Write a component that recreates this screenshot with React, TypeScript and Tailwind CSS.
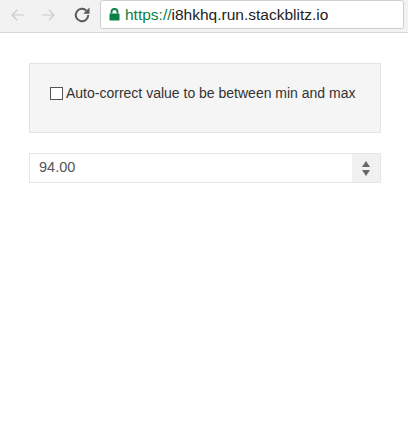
import { useState } from 'react'

export default function App() {
  const [checked, setChecked] = useState(false)
  const [value, setValue] = useState('94.00')

  return (
    <div className="w-[408px] h-[425px] bg-white overflow-hidden" style={{ fontFamily: '"Liberation Sans", Arial, sans-serif' }}>
      {/* browser chrome */}
      <div className="h-[33px] bg-[#f2f2f2] border-b border-[#d6d6d6] flex items-center">
        <div className="flex items-center w-[100px] shrink-0 pl-[9px] gap-[12px] pb-[3px]">
          <svg width="18" height="18" viewBox="0 0 24 24" className="text-[#cbcbcb]">
            <path d="M20 12H5M11 5l-7 7 7 7" fill="none" stroke="currentColor" strokeWidth="1.6" />
          </svg>
          <svg width="18" height="18" viewBox="0 0 24 24" className="text-[#cbcbcb]">
            <path d="M4 12h15M13 5l7 7-7 7" fill="none" stroke="currentColor" strokeWidth="1.6" />
          </svg>
          <svg width="20" height="20" viewBox="0 0 24 24" className="ml-[3px] text-[#5a5a5a]">
            <path d="M19.5 12a7.5 7.5 0 1 1-2.2-5.3" fill="none" stroke="currentColor" strokeWidth="2.4" />
            <path d="M21 3v7.5h-7.5z" fill="currentColor" />
          </svg>
        </div>
        <div className="h-[29px] mb-[3px] flex-1 mr-[4px] bg-white border border-[#cfcfcf] rounded-[3px] flex items-center pl-[8px] gap-[5px]">
          <svg width="11" height="13" viewBox="0 0 11 13">
            <path d="M2.5 5.5V4a3 3 0 0 1 6 0v1.5" fill="none" stroke="#0b8043" strokeWidth="1.8" />
            <rect x="0.5" y="5.5" width="10" height="7" rx="0.5" fill="#0b8043" />
          </svg>
          <span className="text-[15.5px] text-[#222]">
            <span className="text-[#0b8043]">https://</span>i8hkhq.run.stackblitz.io
          </span>
        </div>
      </div>

      {/* page */}
      <div className="ml-[29px] pt-[30px] w-[352px]">
        <div className="h-[70px] bg-[#f5f5f5] border border-[#e3e3e3] flex items-start pl-[20px] pt-[19px]">
          <label className="flex items-center gap-[3px] text-[14px] text-[#333] cursor-pointer">
            <input
              type="checkbox"
              checked={checked}
              onChange={e => setChecked(e.target.checked)}
              className="appearance-none w-[13px] h-[13px] border border-[#555] bg-white rounded-none"
            />
            Auto-correct value to be between min and max
          </label>
        </div>

        <div className="mt-[20px] h-[30px] border border-[#e6e6e6] flex bg-white">
          <input
            value={value}
            onChange={e => setValue(e.target.value)}
            className="flex-1 min-w-0 pl-[9px] text-[14.5px] text-[#555] outline-none bg-transparent"
          />
          <div className="w-[28px] bg-[#f1f1f1] flex flex-col items-center justify-center gap-[3px]">
            <svg width="8" height="6" viewBox="0 0 8 6"><path d="M4 0L8 6H0z" fill="#666" /></svg>
            <svg width="8" height="6" viewBox="0 0 8 6"><path d="M0 0h8L4 6z" fill="#666" /></svg>
          </div>
        </div>
      </div>
    </div>
  )
}
